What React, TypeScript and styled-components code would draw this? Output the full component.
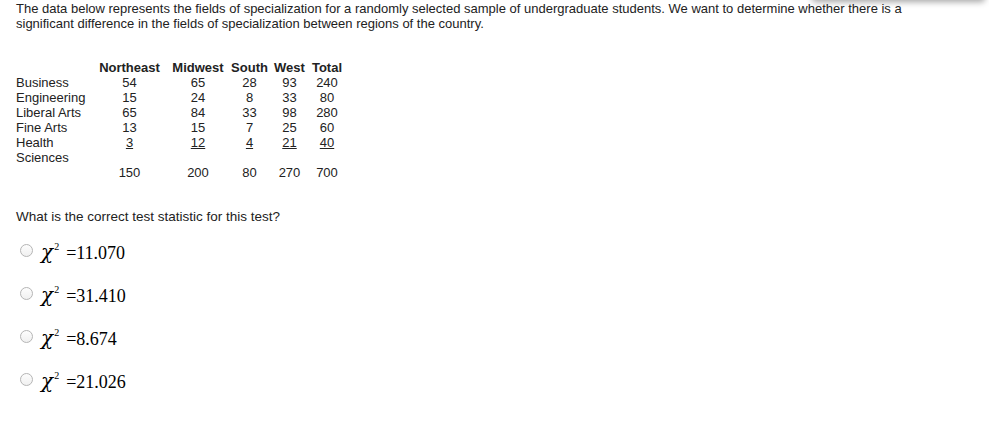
import styled, { createGlobalStyle } from "styled-components";

const GlobalStyle = createGlobalStyle`
  html, body {
    margin: 0;
    padding: 0;
    background: #fff;
  }
  body {
    font-family: "Liberation Sans", Arial, sans-serif;
    color: #222;
  }
`;

const Page = styled.div`
  position: relative;
  width: 989px;
  height: 446px;
  overflow: hidden;
  padding: 1px 16px 0;
  box-sizing: border-box;
`;

// edge of a popup sitting just above the view
const PopupEdge = styled.div`
  position: absolute;
  top: -20px;
  left: 812px;
  width: 173px;
  height: 20px;
  background: #fff;
  box-shadow: 0 2px 6px rgba(0, 0, 0, 0.35);
  border-radius: 0 0 4px 4px;
`;

const Intro = styled.p`
  margin: 0;
  font-size: 13px;
  line-height: 15px;
  width: 905px;
`;

const DataTable = styled.table`
  margin-top: 29px;
  border-collapse: collapse;
  table-layout: fixed;
  font-size: 13px;
  line-height: 15px;
  width: 328px;
`;

const Head = styled.th<{ $w: number }>`
  width: ${(p) => p.$w}px;
  padding: 0;
  font-weight: bold;
  text-align: center;
  white-space: nowrap;
`;

const Label = styled.td`
  padding: 0;
  text-align: left;
  vertical-align: top;
`;

const Cell = styled.td<{ $under?: boolean }>`
  padding: 0;
  text-align: center;
  vertical-align: top;
  text-decoration: ${(p) => (p.$under ? "underline" : "none")};
`;

const Question = styled.p`
  margin: 29px 0 0;
  font-size: 13.5px;
  line-height: 15px;
`;

const Options = styled.div`
  display: flex;
  flex-direction: column;
  gap: 20px;
  margin-top: 17px;
`;

const Option = styled.label`
  display: flex;
  align-items: center;
  height: 23px;
  cursor: pointer;
`;

const Radio = styled.span`
  width: 11px;
  height: 11px;
  margin: 0 8px 4px 4px;
  border: 1px solid #b5b5b5;
  border-radius: 50%;
  background: linear-gradient(#fdfdfd, #f0f0f0);
  box-sizing: content-box;
  flex-shrink: 0;
`;

const Formula = styled.span`
  font-family: "Liberation Serif", "Times New Roman", serif;
  font-size: 18px;
  color: #000;
  white-space: nowrap;
`;

const Chi = styled.i`
  font-family: "DejaVu Serif", serif;
  font-style: italic;
  font-size: 20px;
  line-height: 1;
`;

const Sup = styled.sup`
  font-size: 10px;
  vertical-align: 9px;
  margin: 0 7px 0 1px;
`;

const headers: [string, number][] = [
  ["", 77],
  ["Northeast", 73],
  ["Midwest", 64],
  ["South", 39],
  ["West", 41],
  ["Total", 34],
];

const rows: [string, number[]][] = [
  ["Business", [54, 65, 28, 93, 240]],
  ["Engineering", [15, 24, 8, 33, 80]],
  ["Liberal Arts", [65, 84, 33, 98, 280]],
  ["Fine Arts", [13, 15, 7, 25, 60]],
  ["Health Sciences", [3, 12, 4, 21, 40]],
  ["", [150, 200, 80, 270, 700]],
];

const answers = ["=11.070", "=31.410", "=8.674", "=21.026"];

export default function App() {
  return (
    <Page>
      <GlobalStyle />
      <PopupEdge />
      <Intro>
        The data below represents the fields of specialization for a randomly selected sample of
        undergraduate students. We want to determine whether there is a significant difference in
        the fields of specialization between regions of the country.
      </Intro>
      <DataTable>
        <thead>
          <tr>
            {headers.map(([h, w]) => (
              <Head key={h || "blank"} $w={w}>
                {h}
              </Head>
            ))}
          </tr>
        </thead>
        <tbody>
          {rows.map(([label, values], i) => (
            <tr key={i}>
              <Label>{label}</Label>
              {values.map((v, j) => (
                <Cell key={j} $under={i === 4}>
                  {v}
                </Cell>
              ))}
            </tr>
          ))}
        </tbody>
      </DataTable>
      <Question>What is the correct test statistic for this test?</Question>
      <Options>
        {answers.map((val) => (
          <Option key={val}>
            <Radio />
            <Formula>
              <Chi>χ</Chi>
              <Sup>2</Sup>
              {val}
            </Formula>
          </Option>
        ))}
      </Options>
    </Page>
  );
}
